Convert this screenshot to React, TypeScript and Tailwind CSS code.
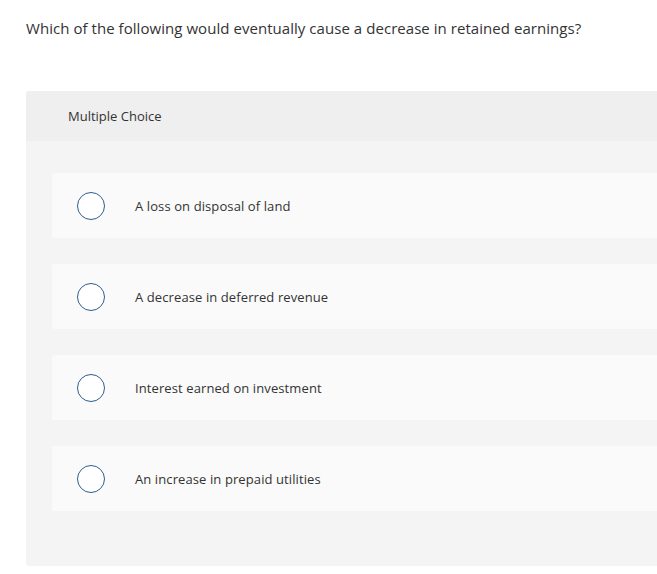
import React from "react";

const options = [
  "A loss on disposal of land",
  "A decrease in deferred revenue",
  "Interest earned on investment",
  "An increase in prepaid utilities",
];

export default function App() {
  return (
    <div
      className="w-[657px] h-[574px] overflow-hidden bg-white text-[#333333]"
      style={{ fontFamily: '"Open Sans", "Liberation Sans", sans-serif' }}
    >
      <div className="pl-[26px] pt-[18px] text-[15px] leading-[20px] tracking-[0.05px]">
        Which of the following would eventually cause a decrease in retained earnings?
      </div>
      <div className="ml-[26px] mt-[53px] w-[640px] rounded-[3px] bg-[#f4f4f4] pb-[55px]">
        <div className="flex h-[50px] items-center rounded-t-[3px] bg-[#efefef] pl-[42px] pt-[2px] text-[13px]">
          Multiple Choice
        </div>
        <div className="flex flex-col gap-[26px] pl-[26px] pt-[32px]">
          {options.map((o) => (
            <div
              key={o}
              className="flex h-[65px] items-center rounded-[3px] bg-[#fafafa] pl-[25px]"
            >
              <div className="h-[28px] w-[28px] shrink-0 rounded-full border-[1.5px] border-[#2c5e8e] bg-white" />
              <span className="ml-[30px] pt-[2px] text-[13px] tracking-[0.1px]">{o}</span>
            </div>
          ))}
        </div>
      </div>
    </div>
  );
}
